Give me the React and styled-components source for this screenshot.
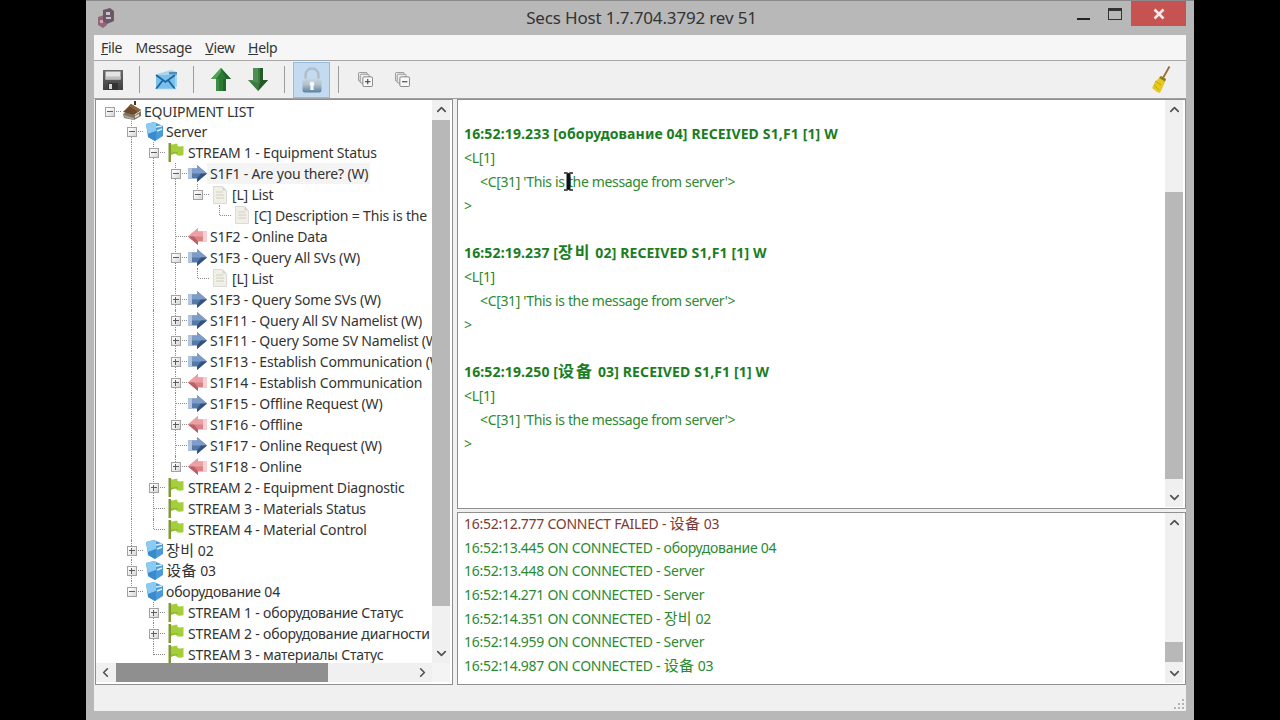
import React from 'react';
import styled, { createGlobalStyle } from 'styled-components';
import { ChevronUp, ChevronDown, ChevronLeft, ChevronRight } from 'lucide-react';

const GlobalStyle = createGlobalStyle`
  html, body {
    margin: 0;
    padding: 0;
    background: #000;
  }
  * {
    box-sizing: border-box;
  }
`;

const FONT = `"Noto Sans", "Noto Sans CJK SC", sans-serif`;

const Screen = styled.div`
  width: 1280px;
  height: 720px;
  background: #000;
  display: flex;
  justify-content: center;
  overflow: hidden;
  font-family: ${FONT};
`;

const Window = styled.div`
  width: 1108px;
  height: 720px;
  background: #b9b8b8;
  border-top: 1px solid #8a8a8a;
  padding: 0 8px 9px;
  display: flex;
  flex-direction: column;
`;

const TitleBar = styled.div`
  height: 34px;
  flex: none;
  display: grid;
  grid-template-columns: 1fr auto 1fr;
  margin: 0 -8px;
  padding: 0 8px 0 11px;
`;

const TitleLeft = styled.div`
  display: flex;
  align-items: flex-start;
  padding-top: 7px;
`;

const TitleText = styled.div`
  font-size: 17px;
  line-height: 34px;
  color: #333;
  letter-spacing: -0.16px;
`;

const WindowControls = styled.div`
  display: flex;
  justify-content: flex-end;
  align-items: flex-start;
`;

const MinButton = styled.div`
  width: 13px;
  height: 2px;
  margin-top: 17px;
  margin-right: 18px;
  background: #222;
`;

const MaxButton = styled.div`
  width: 14px;
  height: 12px;
  margin-top: 7px;
  margin-right: 9px;
  border: 1px solid #333;
  border-top-width: 3px;
`;

const CloseButton = styled.div`
  width: 55px;
  height: 25px;
  background: #c65252;
  display: flex;
  align-items: center;
  justify-content: center;
`;

const MenuBar = styled.div`
  height: 26px;
  flex: none;
  background: #f6f6f6;
  border-bottom: 1px solid #a6a6a6;
  display: flex;
  align-items: center;
  padding-left: 7px;
  gap: 13.4px;
  font-size: 14px;
  color: #333;
  letter-spacing: -0.3px;
`;

const MenuItem = styled.span`
  line-height: 25px;
`;

const Toolbar = styled.div`
  height: 38px;
  flex: none;
  background: #f0f0f0;
  border-bottom: 1px solid #a0a0a0;
  display: flex;
  align-items: stretch;
  padding-top: 1px;
`;

const ToolButton = styled.div`
  width: 37px;
  display: flex;
  align-items: center;
  justify-content: center;
  padding-bottom: 1px;
  background: ${(p) => (p.$active ? '#c4daf1' : 'transparent')};
  border: 1px solid ${(p) => (p.$active ? '#95bbdf' : 'transparent')};
`;

const ToolSep = styled.div`
  width: 1px;
  margin: 4px 8px 5px;
  background: #9c9c9c;
`;

const ToolSpacer = styled.div`
  flex: 1;
`;

const BroomButton = styled(ToolButton)`
  margin-right: 7px;
`;

const Panes = styled.div`
  height: 586px;
  flex: none;
  display: flex;
  background: #f0f0f0;
  padding-left: 1px;
  gap: 4px;
`;

const TreePanel = styled.div`
  width: 358px;
  flex: none;
  background: #fff;
  border: 1px solid #8f8f8f;
  display: grid;
  grid-template-columns: 336px 18px;
  grid-template-rows: 563px 19px;
`;

const TreeView = styled.div`
  overflow: hidden;
  padding: 0.5px 0 0 3px;
  color: #333;
  font-size: 14px;
`;

const TreeRowBox = styled.div`
  height: 20.92px;
  display: flex;
  align-items: stretch;
  white-space: nowrap;
`;

const Indent = styled.div`
  position: relative;
  width: 22px;
  flex: none;

  /* vertical dotted guide */
  &::before {
    content: '';
    display: ${(p) => (p.$up || p.$down ? 'block' : 'none')};
    position: absolute;
    left: 10px;
    top: ${(p) => (p.$up ? '0' : '50%')};
    bottom: ${(p) => (p.$down ? '0' : '50%')};
    border-left: 1px dotted #8a8a8a;
  }

  /* horizontal connector to the icon */
  &::after {
    content: '';
    display: ${(p) => (p.$branch ? 'block' : 'none')};
    position: absolute;
    left: 11px;
    right: 0;
    top: 10px;
    border-top: 1px dotted #8a8a8a;
  }
`;

const Expander = styled.div`
  position: absolute;
  left: 6px;
  top: 6px;
  width: 10px;
  height: 10px;
  z-index: 1;
  border: 1px solid #a2a2a2;
  background: linear-gradient(135deg, #fbfbfb 20%, #d6d6d6 100%);

  &::before {
    content: '';
    position: absolute;
    left: 1px;
    right: 1px;
    top: 3px;
    height: 1px;
    background: #5d5d5d;
  }

  &::after {
    content: '';
    display: ${(p) => (p.$open ? 'none' : 'block')};
    position: absolute;
    top: 1px;
    bottom: 1px;
    left: 3px;
    width: 1px;
    background: #5d5d5d;
  }
`;

const IconSlot = styled.div`
  width: 22px;
  flex: none;
  display: flex;
  align-items: center;
  justify-content: center;
`;

const NodeLabel = styled.span`
  line-height: 21px;
  margin-left: -2px;
  padding: 0 2px 0 3px;
  background: ${(p) => (p.$hover ? '#f4f4f4' : 'transparent')};
  letter-spacing: -0.18px;
`;

const CjkRun = styled.span`
  font-size: ${(p) => p.$size}px;
  line-height: 1;
  letter-spacing: ${(p) => p.$gap}px;
`;

const ScrollV = styled.div`
  background: #f0f0f0;
  display: flex;
  flex-direction: column;
  align-items: stretch;
  height: ${(p) => (p.$h ? `${p.$h}px` : 'auto')};
`;

const ScrollTrack = styled.div`
  flex: 1;
  display: flex;
  flex-direction: column;
`;

const ThumbGap = styled.div`
  height: ${(p) => p.$size}px;
  flex: none;
`;

const ThumbV = styled.div`
  height: ${(p) => p.$size}px;
  flex: none;
  background: #b8b8b8;
`;

const ScrollH = styled.div`
  background: #f0f0f0;
  display: flex;
  align-items: stretch;
`;

const TrackH = styled.div`
  flex: 1;
  display: flex;
`;

const ThumbH = styled.div`
  width: ${(p) => p.$size}px;
  margin-left: 1px;
  background: #8f8f8f;
`;

const Arrow = styled.div`
  flex: none;
  width: ${(p) => (p.$horizontal ? '19px' : 'auto')};
  height: ${(p) => (p.$horizontal ? 'auto' : '19px')};
  display: flex;
  align-items: center;
  justify-content: center;
  color: #505050;
`;

const Corner = styled.div`
  background: #f4f4f4;
`;

const RightColumn = styled.div`
  flex: 1;
  display: flex;
  flex-direction: column;
  gap: 3px;
  min-width: 0;
`;

const TextPanel = styled.div`
  position: relative;
  height: ${(p) => p.$h}px;
  flex: none;
  background: #fff;
  border: 1px solid #8f8f8f;
  display: grid;
  grid-template-columns: 1fr 18px;
  padding: 0 2px 1px 0;
`;

const MessageView = styled.div`
  padding: 22px 0 0 6px;
  font-size: 14px;
  overflow: hidden;
`;

const MessageBlock = styled.div`
  height: 119px;
`;

const Heading = styled.div`
  font-weight: 700;
  height: 24px;
  line-height: 24px;
  color: #1a7d1e;
  letter-spacing: 0.14px;
`;

const BodyLine = styled.div`
  line-height: 24px;
  color: #2b8a30;
  padding-left: ${(p) => (p.$nested ? '16px' : '0')};
  letter-spacing: -0.35px;
`;

const LogView = styled.div`
  padding: 0 0 0 6px;
  margin-top: -1px;
  font-size: 14px;
  overflow: hidden;
`;

const LogLine = styled.div`
  height: 23.7px;
  line-height: 23.7px;
  color: ${(p) => (p.$failed ? '#7d3a34' : '#2b8a30')};
  letter-spacing: -0.27px;
`;

const TextCursor = styled.svg`
  position: absolute;
  left: 105px;
  top: 72px;
`;

const StatusBar = styled.div`
  flex: 1;
  background: #f0f0f0;
  display: flex;
  justify-content: flex-end;
  align-items: flex-end;
  padding: 0 1px 1px 0;
`;

/* ---------- drawn icons ---------- */

const AppIcon = () => (
  <svg width="19" height="20" viewBox="0 0 19 20">
    <path d="M1 9l6-2 3 2v8l-4 3-5-3z" fill="#94667c" />
    <path d="M6 2l7-2 4 3v10l-7 3-4-3z" fill="#6a5869" />
    <path d="M9 4h4v3H9zM9 9h5v2H9z" fill="#c9c2c6" />
    <path d="M3 12h3v3H3z" fill="#d2a7b6" />
  </svg>
);

const FloppyIcon = () => (
  <svg width="22" height="22" viewBox="0 0 22 22">
    <defs>
      <linearGradient id="floppyBody" x1="0" y1="0" x2="0" y2="1">
        <stop offset="0" stopColor="#6a6a6a" />
        <stop offset="1" stopColor="#3f3f3f" />
      </linearGradient>
    </defs>
    <path d="M1 1h20v20H1z" fill="url(#floppyBody)" />
    <path d="M3.500 2.500h15v8h-15z" fill="#e4e4e4" />
    <path d="M3.500 7.500h15v3h-15z" fill="#bdbdbd" />
    <path d="M6 14h10v7H6z" fill="#333" />
    <path d="M7 15h3v5H7z" fill="#d6d6d6" />
  </svg>
);

const MailIcon = () => (
  <svg width="24" height="22" viewBox="0 0 24 22">
    <path d="M2 5l14-4 6 2v15H2z" fill="#a8d6f0" />
    <path d="M1 6h19v14H1z" fill="#7cbfe8" />
    <path d="M1 6l9.500 7L20 6M1 20l7-9M20 20l-7-9" fill="none" stroke="#1667a6" strokeWidth="1.800" />
    <path d="M14 3h8v2.500h-8z" fill="#4a8fbf" />
    <path d="M1 20.500h21" stroke="#d5e9f6" strokeWidth="1.500" />
  </svg>
);

const UpIcon = () => (
  <svg width="20" height="24" viewBox="0 0 20 24">
    <path d="M10 0l10 11h-5v12H5V11H0z" fill="#2c7a33" />
    <path d="M10 0L0 11h5l5-7z" fill="#4ea555" />
    <path d="M5 11h3v12H5z" fill="#3c8f43" />
    <path d="M12 11h3v12h-3zM15 11h5L10 0z" fill="#1e5c25" opacity="0.7" />
  </svg>
);

const DownIcon = () => (
  <svg width="20" height="24" viewBox="0 0 20 24">
    <path d="M5 0h10v12h5L10 23 0 12h5z" fill="#3a7c3f" />
    <path d="M5 0h5v15L0 12h5z" fill="#4f8f52" />
    <path d="M15 0h-3v14l-2 9 10-11h-5z" fill="#24592a" />
  </svg>
);

const LockIcon = () => (
  <svg width="22" height="26" viewBox="0 0 22 26">
    <defs>
      <linearGradient id="lockBody" x1="0" y1="0" x2="0" y2="1">
        <stop offset="0" stopColor="#ccd6df" />
        <stop offset="0.45" stopColor="#aebfcf" />
        <stop offset="1" stopColor="#5d7f9d" />
      </linearGradient>
    </defs>
    <path d="M4.500 12V8a6.500 6.500 0 0113 0v4" fill="none" stroke="#b2bec9" strokeWidth="2.600" />
    <rect x="1.500" y="11.500" width="19" height="14" rx="2" fill="url(#lockBody)" />
    <circle cx="11" cy="17" r="2.400" fill="#f4f8fb" />
    <path d="M9.800 18h2.400l.6 5H9.200z" fill="#f4f8fb" />
  </svg>
);

const CopyIcon = ({ plus }) => (
  <svg width="15" height="15" viewBox="0 0 17 17">
    <rect x="0.500" y="0.500" width="10" height="10" rx="1.500" fill="#eee" stroke="#8c8c8c" />
    <rect x="2.500" y="2.500" width="10" height="10" rx="1.500" fill="#eee" stroke="#8c8c8c" />
    <rect x="5.500" y="5.500" width="11" height="11" rx="1.500" fill="#f8f8f8" stroke="#777" />
    <path d={plus ? 'M8 11h6M11 8v6' : 'M8 11h6'} stroke="#555" strokeWidth="1.400" />
  </svg>
);

const BroomIcon = () => (
  <svg width="20" height="28" viewBox="0 0 20 28">
    <path d="M18.500 0.500L12 12" stroke="#9a6a3a" strokeWidth="1.800" />
    <path d="M10 10l5 3-1 3-5 11-3-1-5-4 3-6z" fill="#e6c81e" />
    <path d="M10 10l5 3-1 2.500-6-3.500z" fill="#8f7a22" />
    <path d="M4 15l6 4M3 19l5 5" stroke="#c4a510" strokeWidth="1" />
  </svg>
);

const HouseIcon = () => (
  <svg width="20" height="19" viewBox="0 0 20 19">
    <path d="M12 0h2v4h-2z" fill="#4a3320" />
    <path d="M1 13l3-2 9 3 6-4v5l-7 4-10-2z" fill="#7d7565" />
    <path d="M2 14l10 3v2L2 16z" fill="#a9a598" />
    <path d="M1 11L9 3l10 6-7 5z" fill="#6d4a2d" />
    <path d="M9 3l10 6-3 2L7 5z" fill="#8c6540" />
    <path d="M13 15l4-2v2l-4 2z" fill="#e6e2d6" />
  </svg>
);

const ServerIcon = () => (
  <svg width="17" height="19" viewBox="0 0 17 19">
    <path d="M0 2l8-2 9 4v10l-8 5-7-4z" fill="#4a9ad8" />
    <path d="M0 2l8-2 2 1v8l-8 3z" fill="#8acbf3" />
    <path d="M2 12l8-3v9l-1 1-7-4z" fill="#3a8bcd" />
    <path d="M10 5l6-1M11 9l5-2" stroke="#d9eefb" strokeWidth="1.400" />
  </svg>
);

const FlagIcon = () => (
  <svg width="16" height="19" viewBox="0 0 16 19">
    <path d="M0.500 0h2.500v19H0.500z" fill="#7f9a34" />
    <path d="M3 1c3 1.500 4-1 6.500 0v2c2 .8 3 .4 6 0v9c-2 1-5 1-7 0v-1c-2-1-3 0-5.500 .8z" fill="#a4cf3a" />
    <path d="M9.500 1v10c-2-1-3.500 0-6.500 .8v-2c3-.8 4.500-1 6.500-.8z" fill="#8dbb28" />
  </svg>
);

const SendIcon = () => (
  <svg width="20" height="17" viewBox="0 0 20 17">
    <path d="M0 3.500h9V0l10 8.500L9 17v-3.500H0z" fill="#5478a8" />
    <path d="M4 3.500h5V0l10 8.500H4z" fill="#7d9cc8" />
    <path d="M0 3.500h4v10H0z" fill="#b4c6de" />
    <path d="M9 13.500V17l10-8.500h-6z" fill="#33527f" />
  </svg>
);

const ReplyIcon = () => (
  <svg width="20" height="17" viewBox="0 0 20 17">
    <path d="M19 3.500h-9V0L0 8.500 10 17v-3.500h9z" fill="#dc8088" />
    <path d="M15 3.500h-5V0L0 8.500h15z" fill="#eba0a6" />
    <path d="M15 3.500h4v10h-4z" fill="#f4d0d2" />
    <path d="M10 13.500V17L0 8.500h6z" fill="#b95f66" />
  </svg>
);

const DocIcon = () => (
  <svg width="14" height="18" viewBox="0 0 14 18">
    <path d="M0.500 0.500h9l4 4v13h-13z" fill="#f1efe6" stroke="#dadada" />
    <path d="M9.500 0.500v4h4z" fill="#d8d6cb" />
    <path d="M3 6h7M3 9h8M3 12h8" stroke="#d2d0c4" />
  </svg>
);

const CloseGlyph = () => (
  <svg width="12" height="12" viewBox="0 0 12 12">
    <path d="M1.500 1.500l9 9M10.500 1.500l-9 9" stroke="#f7e9e9" strokeWidth="2.600" />
  </svg>
);

const Grip = () => (
  <svg width="11" height="11" viewBox="0 0 11 11" fill="#b3b3b3">
    <path d="M8 0h2v2H8zM4 4h2v2H4zM8 4h2v2H8zM0 8h2v2H0zM4 8h2v2H4zM8 8h2v2H8z" />
  </svg>
);

const ICONS = {
  house: HouseIcon,
  server: ServerIcon,
  flag: FlagIcon,
  send: SendIcon,
  reply: ReplyIcon,
  doc: DocIcon,
};

/* ---------- data ---------- */

const stream1 = [
  {
    icon: 'send',
    label: 'S1F1 - Are you there? (W)',
    hover: true,
    open: true,
    children: [
      {
        icon: 'doc',
        label: '[L] List',
        open: true,
        children: [{ icon: 'doc', label: '[C] Description = This is the' }],
      },
    ],
  },
  { icon: 'reply', label: 'S1F2 - Online Data' },
  { icon: 'send', label: 'S1F3 - Query All SVs (W)', open: true, children: [{ icon: 'doc', label: '[L] List' }] },
  { icon: 'send', label: 'S1F3 - Query Some SVs (W)', closed: true },
  { icon: 'send', label: 'S1F11 - Query All SV Namelist (W)', closed: true },
  { icon: 'send', label: 'S1F11 - Query Some SV Namelist (W)', closed: true },
  { icon: 'send', label: 'S1F13 - Establish Communication (W)', closed: true },
  { icon: 'reply', label: 'S1F14 - Establish Communication', closed: true },
  { icon: 'send', label: 'S1F15 - Offline Request (W)' },
  { icon: 'reply', label: 'S1F16 - Offline', closed: true },
  { icon: 'send', label: 'S1F17 - Online Request (W)' },
  { icon: 'reply', label: 'S1F18 - Online', closed: true },
];

const tree = [
  {
    icon: 'house',
    label: 'EQUIPMENT LIST',
    open: true,
    children: [
      {
        icon: 'server',
        label: 'Server',
        open: true,
        children: [
          { icon: 'flag', label: 'STREAM 1 - Equipment Status', open: true, children: stream1 },
          { icon: 'flag', label: 'STREAM 2 - Equipment Diagnostic', closed: true },
          { icon: 'flag', label: 'STREAM 3 - Materials Status' },
          { icon: 'flag', label: 'STREAM 4 - Material Control' },
        ],
      },
      { icon: 'server', label: '장비 02', closed: true },
      { icon: 'server', label: '设备 03', closed: true },
      {
        icon: 'server',
        label: 'оборудование 04',
        open: true,
        children: [
          { icon: 'flag', label: 'STREAM 1 - оборудование Статус', closed: true },
          { icon: 'flag', label: 'STREAM 2 - оборудование диагности', closed: true },
          { icon: 'flag', label: 'STREAM 3 - материалы Статус' },
        ],
      },
    ],
  },
];

// walk the tree into flat rows, remembering which ancestor guides keep going
const flatten = (nodes, guides = [], out = []) => {
  nodes.forEach((node, i) => {
    const last = i === nodes.length - 1;
    out.push({ ...node, guides, last, depth: guides.length });
    if (node.children) flatten(node.children, [...guides, !last], out);
  });
  return out;
};

const rows = flatten(tree);

const messages = [
  '16:52:19.233 [оборудование 04] RECEIVED S1,F1 [1] W',
  '16:52:19.237 [장비 02] RECEIVED S1,F1 [1] W',
  '16:52:19.250 [设备 03] RECEIVED S1,F1 [1] W',
];

const logLines = [
  { text: '16:52:12.777 CONNECT FAILED - 设备 03', failed: true },
  { text: '16:52:13.445 ON CONNECTED - оборудование 04' },
  { text: '16:52:13.448 ON CONNECTED - Server' },
  { text: '16:52:14.271 ON CONNECTED - Server' },
  { text: '16:52:14.351 ON CONNECTED - 장비 02' },
  { text: '16:52:14.959 ON CONNECTED - Server' },
  { text: '16:52:14.987 ON CONNECTED - 设备 03' },
];

/* ---------- parts ---------- */

// the CJK glyphs sit a little wider in the original UI font
function Spaced({ text, size = 14, gap }) {
  return text
    .split(/([\uac00-\ud7af\u4e00-\u9fff]+)/)
    .map((part, i) => (i % 2 ? <CjkRun key={i} $size={size} $gap={gap}>{part}</CjkRun> : part));
}

function TreeRow({ row }) {
  const Icon = ICONS[row.icon];
  const isRoot = row.depth === 0;
  return (
    <TreeRowBox>
      {row.guides.map((on, i) => (
        <Indent key={i} $up={on} $down={on} />
      ))}
      <Indent $up={!isRoot} $down={!row.last} $branch>
        {(row.open || row.closed) && <Expander $open={row.open} />}
      </Indent>
      <IconSlot>
        <Icon />
      </IconSlot>
      <NodeLabel $hover={row.hover}>
        <Spaced text={row.label} size={15} gap={0.4} />
      </NodeLabel>
    </TreeRowBox>
  );
}

function VerticalScroll({ gap, thumb, height }) {
  return (
    <ScrollV $h={height}>
      <Arrow>
        <ChevronUp size={15} strokeWidth={2.6} />
      </Arrow>
      <ScrollTrack>
        <ThumbGap $size={gap} />
        <ThumbV $size={thumb} />
      </ScrollTrack>
      <Arrow>
        <ChevronDown size={15} strokeWidth={2.6} />
      </Arrow>
    </ScrollV>
  );
}

export default function App() {
  return (
    <Screen>
      <GlobalStyle />
      <Window>
        <TitleBar>
          <TitleLeft>
            <AppIcon />
          </TitleLeft>
          <TitleText>Secs Host 1.7.704.3792 rev 51</TitleText>
          <WindowControls>
            <MinButton />
            <MaxButton />
            <CloseButton>
              <CloseGlyph />
            </CloseButton>
          </WindowControls>
        </TitleBar>

        <MenuBar>
          <MenuItem>
            <u>F</u>ile
          </MenuItem>
          <MenuItem>Message</MenuItem>
          <MenuItem>
            <u>V</u>iew
          </MenuItem>
          <MenuItem>
            <u>H</u>elp
          </MenuItem>
        </MenuBar>

        <Toolbar>
          <ToolButton>
            <FloppyIcon />
          </ToolButton>
          <ToolSep />
          <ToolButton>
            <MailIcon />
          </ToolButton>
          <ToolSep />
          <ToolButton>
            <UpIcon />
          </ToolButton>
          <ToolButton>
            <DownIcon />
          </ToolButton>
          <ToolSep />
          <ToolButton $active>
            <LockIcon />
          </ToolButton>
          <ToolSep />
          <ToolButton>
            <CopyIcon plus />
          </ToolButton>
          <ToolButton>
            <CopyIcon />
          </ToolButton>
          <ToolSpacer />
          <BroomButton>
            <BroomIcon />
          </BroomButton>
        </Toolbar>

        <Panes>
          <TreePanel>
            <TreeView>
              {rows.map((row, i) => (
                <TreeRow key={i} row={row} />
              ))}
            </TreeView>
            <VerticalScroll gap={1} thumb={486} />
            <ScrollH>
              <Arrow $horizontal>
                <ChevronLeft size={15} strokeWidth={2.6} />
              </Arrow>
              <TrackH>
                <ThumbH $size={212} />
              </TrackH>
              <Arrow $horizontal>
                <ChevronRight size={15} strokeWidth={2.6} />
              </Arrow>
            </ScrollH>
            <Corner />
          </TreePanel>

          <RightColumn>
            <TextPanel $h={410}>
              <MessageView>
                {messages.map((m) => (
                  <MessageBlock key={m}>
                    <Heading>
                      <Spaced text={m} size={16} gap={2} />
                    </Heading>
                    <BodyLine>{'<L[1]'}</BodyLine>
                    <BodyLine $nested>{"<C[31] 'This is the message from server'>"}</BodyLine>
                    <BodyLine>{'>'}</BodyLine>
                  </MessageBlock>
                ))}
              </MessageView>
              <VerticalScroll gap={73} thumb={287} height={407} />
              <TextCursor width="11" height="19" viewBox="0 0 11 19">
                <path d="M1 1h3l1.500 1L7 1h3M1 18h3l1.500-1L7 18h3" fill="none" stroke="#222" strokeWidth="1.400" />
                <path d="M3.500 2h4v15h-4z" fill="#111" />
              </TextCursor>
            </TextPanel>

            <TextPanel $h={173}>
              <LogView>
                {logLines.map((l) => (
                  <LogLine key={l.text} $failed={l.failed}>
                    <Spaced text={l.text} size={15} gap={0.4} />
                  </LogLine>
                ))}
              </LogView>
              <VerticalScroll gap={110} thumb={20} height={170} />
            </TextPanel>
          </RightColumn>
        </Panes>

        <StatusBar>
          <Grip />
        </StatusBar>
      </Window>
    </Screen>
  );
}
